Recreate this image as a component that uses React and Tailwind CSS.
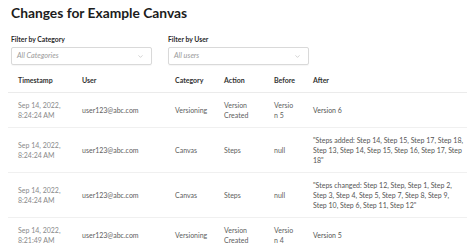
import { ChevronDown } from 'lucide-react';

const rows = [
  {
    date: 'Sep 14, 2022,',
    time: '8:24:24 AM',
    user: 'user123@abc.com',
    category: 'Versioning',
    action: ['Version', 'Created'],
    before: ['Versio', 'n 5'],
    after: ['Version 6'],
  },
  {
    date: 'Sep 14, 2022,',
    time: '8:24:24 AM',
    user: 'user123@abc.com',
    category: 'Canvas',
    action: ['Steps'],
    before: ['null'],
    after: [
      '"Steps added: Step 14, Step 15, Step 17, Step 18,',
      'Step 13, Step 14, Step 15, Step 16, Step 17, Step',
      '18"',
    ],
  },
  {
    date: 'Sep 14, 2022,',
    time: '8:24:24 AM',
    user: 'user123@abc.com',
    category: 'Canvas',
    action: ['Steps'],
    before: ['null'],
    after: [
      '"Steps changed: Step 12, Step, Step 1, Step 2,',
      'Step 3, Step 4, Step 5, Step 7, Step 8, Step 9,',
      'Step 10, Step 6, Step 11, Step 12"',
    ],
  },
  {
    date: 'Sep 14, 2022,',
    time: '8:21:49 AM',
    user: 'user123@abc.com',
    category: 'Versioning',
    action: ['Version', 'Created'],
    before: ['Versio', 'n 4'],
    after: ['Version 5'],
  },
];

const cols = 'grid grid-cols-[64px_93px_49px_50px_39px_1fr]';

function Lines({ lines }) {
  return (
    <div>
      {lines.map((l, i) => (
        <div key={i} className="whitespace-nowrap">{l}</div>
      ))}
    </div>
  );
}

function Select({ placeholder }) {
  return (
    <div className="w-[141px] h-[18px] border border-[#d9d9d9] rounded-[2px] shadow-[0_1px_1px_rgba(0,0,0,0.04)] flex items-center justify-between pl-[5px] pr-[7px]">
      <span className="italic text-[7.3px] text-[#9a9a9a]">{placeholder}</span>
      <ChevronDown className="w-[7px] h-[7px] text-[#b5b5b5]" strokeWidth={2} />
    </div>
  );
}

export default function App() {
  return (
    <div className="w-[474px] h-[248px] overflow-hidden bg-white font-['Lato',sans-serif]">
      <div className="pl-[11px] pt-[4px]">
        <h1 className="text-[13.8px] leading-[18px] font-bold text-[#1c1c1c]">Changes for Example Canvas</h1>
        <div className="flex gap-[16px] mt-[13px]">
          <div>
            <div className="text-[6.8px] leading-[9px] font-bold text-[#2a2a2a] mb-[3px]">Filter by Category</div>
            <Select placeholder="All Categories" />
          </div>
          <div>
            <div className="text-[6.8px] leading-[9px] font-bold text-[#2a2a2a] mb-[3px]">Filter by User</div>
            <Select placeholder="All users" />
          </div>
        </div>
      </div>

      <div className="ml-[8px] w-[459px] mt-[4px]">
        <div className={`${cols} h-[24px] items-center border-b border-[#ebebeb] text-[7px] font-bold text-[#333]`}>
          <div className="pl-[10px]">Timestamp</div>
          <div className="pl-[10px]">User</div>
          <div className="pl-[10px]">Category</div>
          <div className="pl-[10px]">Action</div>
          <div className="pl-[10px]">Before</div>
          <div className="pl-[10px]">After</div>
        </div>
        {rows.map((r, i) => (
          <div
            key={i}
            className={`${cols} items-center py-[7px] border-b border-[#f0f0f0] text-[7px] leading-[10px] text-[#606060]`}
          >
            <div className="pl-[10px] text-[#8a8a8a]">
              <div className="whitespace-nowrap">{r.date}</div>
              <div className="whitespace-nowrap">{r.time}</div>
            </div>
            <div className="pl-[10px]">{r.user}</div>
            <div className="pl-[10px]">{r.category}</div>
            <div className="pl-[10px]"><Lines lines={r.action} /></div>
            <div className="pl-[10px]"><Lines lines={r.before} /></div>
            <div className="pl-[10px] text-[#555]"><Lines lines={r.after} /></div>
          </div>
        ))}
      </div>
    </div>
  );
}
